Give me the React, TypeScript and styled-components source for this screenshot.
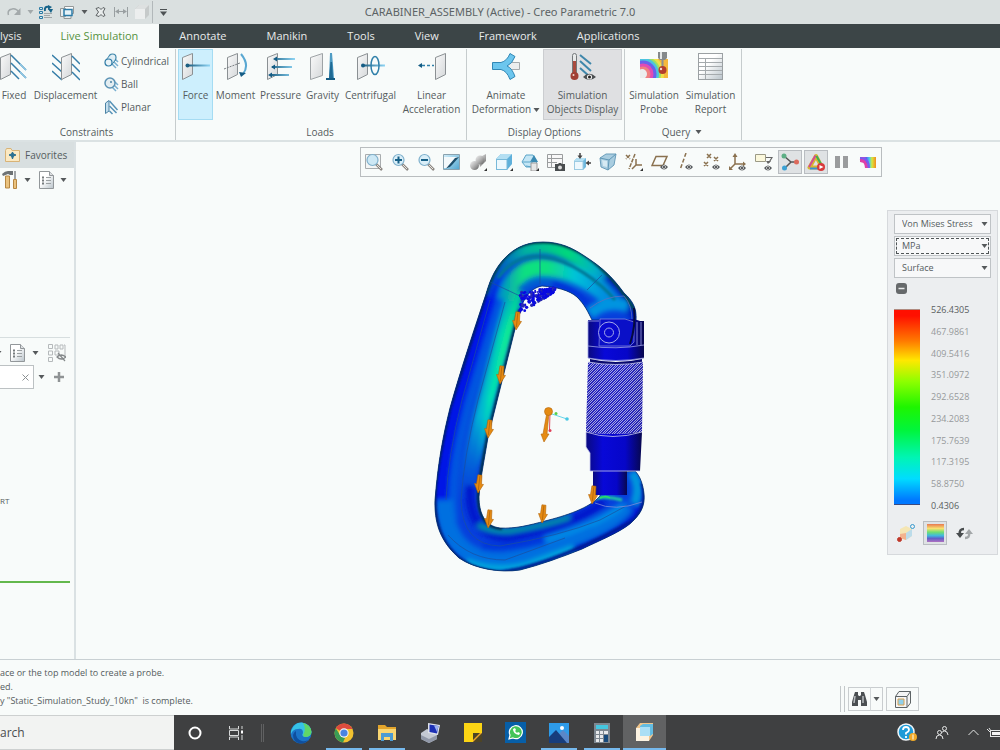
import React from "react";
import styled, { createGlobalStyle, css } from "styled-components";

const sans = `"Open Sans", "Noto Sans", sans-serif`;

const Global = createGlobalStyle`
  * { box-sizing: border-box; }
  body { margin: 0; background: #f8fbfa; color: #555c5e; font-family: ${sans}; font-size: 10px; line-height: 14px; }
  button, input, select { font: inherit; color: inherit; margin: 0; }
  svg { display: block; flex: none; }
`;

/* ---------- shell ---------- */
const Page = styled.div`
  display: flex;
  flex-direction: column;
  min-height: 100vh;
  overflow: hidden;
`;

const TitleBar = styled.header`
  display: grid;
  grid-template-columns: 1fr auto 1fr;
  align-items: center;
  height: 24px;
  background: #dae0e0;
`;

const Quick = styled.div`
  display: flex;
  align-items: center;
  height: 24px;
  padding-left: 4px;
`;

const IconButton = styled.button<{ $w?: number; $active?: boolean }>`
  display: flex;
  align-items: center;
  justify-content: center;
  flex: none;
  width: ${(p) => p.$w ?? 24}px;
  height: 24px;
  padding: 0;
  border: 1px solid ${(p) => (p.$active ? "#b9bdc1" : "transparent")};
  background: ${(p) => (p.$active ? "#dfe2e4" : "transparent")};
`;

const QuickRule = styled.span`
  width: 1px;
  height: 22px;
  background: #b2b8ba;
`;

const Title = styled.h1`
  margin: 0;
  font-family: "Noto Sans", ${sans};
  font-size: 11px;
  font-weight: 400;
  color: #5c6365;
`;

const Tabs = styled.nav`
  display: flex;
  height: 24px;
  background: #3c4547;
`;

const Tab = styled.button<{ $active?: boolean; $cut?: boolean }>`
  flex: none;
  padding: ${(p) => (p.$cut ? "0 18px 0 0" : p.$active ? "0 21px" : "0 20px")};
  border: 0;
  font-size: 11px;
  color: ${(p) => (p.$active ? "#56923f" : "#e8ebeb")};
  background: ${(p) => (p.$active ? "#f8fbfa" : "transparent")};
`;

/* ---------- ribbon ---------- */
const Ribbon = styled.div`
  display: flex;
  height: 94px;
  padding-top: 1px;
  border-bottom: 2px solid #dbe2e3;
  background: #f8fbfa;
`;

const Group = styled.section<{ $w: number }>`
  display: flex;
  flex-direction: column;
  flex: none;
  width: ${(p) => p.$w}px;
  padding-right: 2px;
  border-right: 1px solid #c6cccd;
`;

const GroupBody = styled.div<{ $pad: number }>`
  display: flex;
  flex: none;
  height: 71px;
  padding-left: ${(p) => p.$pad}px;
`;

const GroupLabel = styled.div`
  display: flex;
  align-items: center;
  justify-content: center;
  gap: 5px;
  flex: 1;
  padding-top: 3px;
`;

const BigButton = styled.button<{ $w: number; $tone?: "blue" | "grey" }>`
  display: flex;
  flex-direction: column;
  align-items: center;
  flex: none;
  width: ${(p) => p.$w}px;
  height: 71px;
  padding: 2px 0 0;
  border: 1px solid transparent;
  background: transparent;
  white-space: nowrap;
  ${(p) => p.$tone === "blue" && css`background: #cdeffd; border-color: #a5dcf3;`}
  ${(p) => p.$tone === "grey" && css`background: #dfe0e2; border-color: #cbcdd0;`}
`;

const BigLabel = styled.span`
  display: block;
  margin-top: 6px;
`;

const SmallStack = styled.div`
  display: flex;
  flex-direction: column;
  padding-left: 1px;
`;

const SmallButton = styled.button`
  display: flex;
  align-items: center;
  gap: 2px;
  height: 23px;
  padding: 0;
  border: 0;
  background: transparent;
  white-space: nowrap;
`;

/* ---------- work area ---------- */
const Work = styled.main`
  display: flex;
  flex: 1;
  border-bottom: 1px solid #c9d0d3;
`;

const Side = styled.aside`
  display: flex;
  flex-direction: column;
  flex: none;
  width: 76px;
  overflow: hidden;
  border-right: 2px solid #dae1e3;
`;

const Favorites = styled.button`
  display: flex;
  align-items: center;
  gap: 5px;
  width: 74px;
  height: 26px;
  padding: 0 0 0 5px;
  border: 0;
  background: #d8dfe0;
`;

const SideRow = styled.div<{ $cut?: boolean }>`
  display: flex;
  align-items: center;
  height: 24px;
  margin-left: ${(p) => (p.$cut ? "-5px" : "0")};
`;

const CutCaret = styled.span`
  flex: none;
  width: 10px;
`;

const SideTree = styled.div`
  width: 70px;
  height: 146px;
  margin-bottom: 3px;
  border-bottom: 1px solid #d7dedf;
`;

const Filter = styled.input`
  width: 17px;
  height: 22px;
  padding: 0;
  border: 0;
  background: transparent;
  outline: 0;
`;

const FilterBox = styled.div`
  display: flex;
  align-items: center;
  width: 34px;
  height: 24px;
  border: 1px solid #bcc1c3;
  border-left: 0;
  background: #fff;
`;

const Model = styled.div`
  height: 194px;
  padding-top: 105px;
  width: 70px;
  border-bottom: 2px solid #63b84c;
  font-size: 8px;
`;

const Canvas = styled.div`
  display: flex;
  flex-direction: column;
  flex: 1;
  min-width: 0;
`;

const ViewBar = styled.div`
  display: flex;
  align-items: center;
  align-self: flex-start;
  height: 30px;
  margin: 5px 0 0 284px;
  border: 1px solid #b9bdbf;
`;

const ViewSlot = styled.div`
  display: flex;
  justify-content: center;
  width: 26px;
`;

const Stage = styled.div`
  display: flex;
  align-items: flex-start;
  justify-content: space-between;
  padding: 33px 2px 0 354px;
`;

const Drawing = styled.div`
  padding-top: 26px;
`;

/* ---------- legend ---------- */
const Legend = styled.section`
  flex: none;
  width: 111px;
  height: 345px;
  padding: 3px 6px;
  border: 1px solid #d6d9dc;
  background: #eceef0;
`;

const Pick = styled.label<{ $focus?: boolean }>`
  display: flex;
  align-items: center;
  height: 20px;
  margin-bottom: 2px;
  padding-right: 2px;
  border: 1px solid #bfc3c6;
  outline: ${(p) => (p.$focus ? "1px dashed #4f5557" : "0")};
  outline-offset: -3px;
  background: #f7f8f9;
  font-size: 9px;
`;

const PickSelect = styled.select`
  appearance: none;
  flex: 1;
  min-width: 0;
  height: 16px;
  padding: 0 0 0 7px;
  border: 0;
  outline: 0;
  background: transparent;
`;

const Collapse = styled.button`
  display: block;
  margin: 5px 0 0 2px;
  padding: 0;
  border: 0;
  background: transparent;
`;

const Scale = styled.div`
  display: flex;
  gap: 11px;
  height: 208px;
  margin-top: 10px;
`;

const Ramp = styled.div`
  width: 26px;
  height: 196px;
  margin-top: 5px;
  border-top: 1px solid #b08a80;
  border-bottom: 1px solid #3c4a80;
  background: linear-gradient(#ff1000 3%, #ff7a00 16%, #ffe800 26%, #8cff00 37%, #1ef500 50%, #00f53c 62%, #00f5b4 76%, #00dcff 87%, #0078ff 98%);
`;

const Values = styled.ol`
  display: flex;
  flex-direction: column;
  justify-content: space-between;
  margin: 0;
  padding: 0;
  list-style: none;
  font-size: 9px;
  line-height: 12px;
`;

const Value = styled.li<{ $end: boolean }>`
  color: ${(p) => (p.$end ? "#595e60" : "#96999b")};
`;

const LegendTools = styled.div`
  display: flex;
  align-items: center;
  gap: 5px;
  margin-top: 9px;
`;

/* ---------- messages and taskbar ---------- */
const Status = styled.footer`
  display: flex;
  justify-content: space-between;
  height: 55px;
  padding: 6px 81px 0 0;
`;

const Messages = styled.div`
  font-size: 9px;
  line-height: 14px;
  white-space: pre;
`;

const StatusTools = styled.div`
  display: flex;
  align-items: center;
  align-self: flex-end;
  gap: 3px;
  height: 26px;
  margin-bottom: 3px;
`;

const Grip = styled.span`
  width: 1px;
  height: 26px;
  background: #c3c8ca;
`;

const ToolBox = styled.div`
  display: flex;
  align-items: center;
  height: 24px;
  border: 1px solid #c9cdcf;
  & > button + button { border-left-color: #d3d7d9; }
`;

const Taskbar = styled.div`
  display: flex;
  height: 35px;
  background: #3f4041;
`;

const Search = styled.input`
  flex: none;
  width: 174px;
  height: 35px;
  padding: 0;
  border: 0;
  border-top: 1px solid #cdd0d0;
  border-bottom: 1px solid #cdd0d0;
  background: #f2f3f2;
  && { font-size: 12px; color: #4a4d4f; }
`;

const TaskButton = styled.button<{ $w?: number; $open?: boolean; $active?: boolean }>`
  display: flex;
  align-items: center;
  justify-content: center;
  flex: none;
  width: ${(p) => p.$w ?? 43}px;
  height: 35px;
  padding: 0;
  border: 0;
  background: ${(p) => (p.$active ? "#616263" : "transparent")};
  ${(p) =>
    p.$open &&
    css`
      background-image: linear-gradient(#76b9ed, #76b9ed);
      background-repeat: no-repeat;
      background-position: center bottom;
      background-size: ${p.$active ? "100%" : "36px"} 2px;
    `}
`;

const TaskRule = styled.span`
  align-self: center;
  width: 3px;
  height: 18px;
  margin: 0 15px 0 5px;
  border: 1px solid #606162;
  border-width: 0 1px;
`;

const Tray = styled.div`
  display: flex;
  margin-left: auto;
`;

/* ---------- icons ---------- */
type Kids = { children: React.ReactNode };
const I = ({ w, h, children }: Kids & { w: number; h: number }) => (
  <svg width={w} height={h} viewBox={`0 0 ${w} ${h}`} fill="none" aria-hidden="true">
    {children}
  </svg>
);

const Caret = ({ color = "#55595b" }: { color?: string }) => (
  <I w={7} h={4}><path d="M0.5 0h6L3.5 4z" fill={color} /></I>
);

const Eye = ({ x, y }: { x: number; y: number }) => (
  <g transform={`translate(${x} ${y})`}>
    <path d="M0 3Q4 -2 8 3Q4 8 0 3Z" fill="#55595c" />
    <circle cx="4" cy="3" r="1.800" fill="#f4f4f4" />
    <circle cx="4" cy="3" r="1" fill="#2c2f31" />
  </g>
);

const DefsSvg = styled.svg`
  position: absolute;
  width: 0;
  height: 0;
`;

const Gradients = () => (
  <DefsSvg aria-hidden="true">
    <defs>
      <linearGradient id="plate" x1="0" y1="0" x2="1" y2="1">
        <stop offset="0" stopColor="#fafafa" /><stop offset="1" stopColor="#d4d7d9" />
      </linearGradient>
      <linearGradient id="beam" x1="0" y1="0" x2="1" y2="0">
        <stop offset="0" stopColor="#1c5f82" /><stop offset="1" stopColor="#8fd5f5" />
      </linearGradient>
      <linearGradient id="rainbow" x1="0" y1="0" x2="1" y2="0">
        <stop offset="0" stopColor="#e8402c" /><stop offset=".2" stopColor="#d545c8" /><stop offset=".4" stopColor="#5b62f0" />
        <stop offset=".58" stopColor="#46d0e8" /><stop offset=".75" stopColor="#d8e63c" /><stop offset="1" stopColor="#f48a1e" />
      </linearGradient>
      <linearGradient id="spectrum" x1="0" y1="0" x2="0" y2="1">
        <stop offset="0" stopColor="#e87850" /><stop offset=".25" stopColor="#f8e070" /><stop offset=".45" stopColor="#70e070" />
        <stop offset=".65" stopColor="#40b8e0" /><stop offset=".8" stopColor="#6060c8" /><stop offset="1" stopColor="#b070c0" />
      </linearGradient>
      <linearGradient id="sheet" x1="0" y1="0" x2="1" y2="1">
        <stop offset=".4" stopColor="#fff" /><stop offset="1" stopColor="#b9c3ca" />
      </linearGradient>
      <linearGradient id="aqua" x1="0" y1="0" x2="1" y2="1">
        <stop offset="0" stopColor="#d5effa" /><stop offset="1" stopColor="#4fa6d0" />
      </linearGradient>
      <linearGradient id="steel" x1="0" y1="0" x2="1" y2="1">
        <stop offset="0" stopColor="#f4f4f4" /><stop offset=".5" stopColor="#b2b2b2" /><stop offset="1" stopColor="#5e5e5e" />
      </linearGradient>
    </defs>
  </DefsSvg>
);

const Plate = ({ x = 0 }: { x?: number }) => (
  <path d={`M${x + 0.5} 5.5L${x + 10.5} 1.5V22.5L${x + 0.5} 27.5Z`} fill="url(#plate)" stroke="#8b9093" />
);

const FixedIcon = () => (
  <I w={28} h={30}>
    <Plate />
    <path d="M11 3L26 18M11 11L26 26M11 19L19 27" stroke="#367ea8" strokeWidth="1.500" />
    <path d="M20 12l6 6M20 20l6 6" stroke="#8fc7e4" strokeWidth="1.500" />
  </I>
);
const DisplacementIcon = () => (
  <I w={28} h={30}>
    <g stroke="#367ea8" strokeWidth="1.500"><path d="M0 3L10 12M0 11L10 20M0 19L10 28" /></g>
    <Plate x={9} />
    <g stroke="#367ea8" strokeWidth="1.500"><path d="M20 4L28 12M20 12L28 20M20 20L28 28" /></g>
  </I>
);
const ForceIcon = () => (
  <I w={28} h={30}><Plate /><path d="M6 12.500H28v2H6z" fill="url(#beam)" /><circle cx="5.500" cy="13.500" r="2" fill="#1c5f82" /></I>
);
const MomentIcon = () => (
  <I w={24} h={30}>
    <Plate x={3} /><path d="M0 17L16 11" stroke="#777c80" strokeDasharray="2 1" />
    <path d="M17 2Q26 13 19 22" stroke="#5aa8d2" strokeWidth="2" /><path d="M15 20l7 1-5 4z" fill="#155c84" />
  </I>
);
const PressureIcon = () => (
  <I w={28} h={30}>
    <Plate />
    <path d="M8 6H28v2H8zM5 14H25v2H5zM3 22H22v2H3z" fill="url(#beam)" />
    <path d="M6 7l4-2.500v5zM4 15l4-2.500v5zM1 23l4-2.500v5z" fill="#155c84" />
  </I>
);
const GravityIcon = () => (
  <I w={26} h={30}>
    <path d="M.5 5.500L12.500 1.500V23.500L.5 27.500Z" fill="url(#plate)" stroke="#9ea3a6" />
    <path d="M20 1h2l2 25h-5z" fill="#4f9cc4" /><path d="M20.500 10h1.500l1 16h-4z" fill="#1f6a94" /><path d="M16 26h9v2h-9z" fill="#155c84" />
  </I>
);
const CentrifugalIcon = () => (
  <I w={28} h={30}>
    <Plate /><path d="M6 12.500H28v2H6z" fill="url(#beam)" /><circle cx="6" cy="13.500" r="2" fill="#155c84" />
    <ellipse cx="18" cy="13.500" rx="4" ry="9" stroke="#2f7fa9" strokeWidth="1.500" />
  </I>
);
const LinearIcon = () => (
  <I w={28} h={30}>
    <Plate x={17} /><path d="M4 13.500H16" stroke="#2f7fa9" strokeWidth="1.500" strokeDasharray="3 2" /><path d="M0 13.500l4-2.500v5z" fill="#155c84" />
  </I>
);
const AnimateIcon = () => (
  <I w={28} h={30}>
    <path d="M14 10.500H27.500V17.500H14Z" fill="#eceeee" stroke="#a6abad" />
    <path d="M.5 10.500H9Q15 9 18 1.500L23 4.500Q20 12 15 14Q20 16 23 24.500L18 27.500Q15 19 9 17.500H.5Z" fill="#6cc6ee" stroke="#3187b5" />
  </I>
);
const ObjectsIcon = () => (
  <I w={26} h={30}>
    <rect x="2.500" y="1.500" width="4" height="22" rx="2" fill="#e8eaea" stroke="#75797b" />
    <path d="M3 9h3v14H3z" fill="#a94a3e" /><circle cx="4.500" cy="24" r="4" fill="#a03f35" /><circle cx="3.500" cy="23" r="1" fill="#f0d8d0" />
    <g stroke="#3f87ab" strokeWidth="2"><path d="M10 3L21 12M10 9L21 19M10 16L19 24" /></g>
    <path d="M13 25Q19 18.500 26 25Q19 31 13 25Z" fill="#4a4e50" /><circle cx="19.500" cy="25" r="2.600" fill="#eee" /><circle cx="19.500" cy="25" r="1.500" fill="#222" />
  </I>
);
const ProbeIcon = () => (
  <I w={28} h={30}>
    <defs><clipPath id="probeBox"><path d="M0 7H28V26H0Z" /></clipPath></defs>
    <g clipPath="url(#probeBox)">
      <path d="M0 7H28V26H0Z" fill="#f5b83c" />
      <circle cx="3" cy="22" r="21" fill="#f0e04a" /><circle cx="3" cy="22" r="18" fill="#9be068" /><circle cx="3" cy="22" r="16" fill="#4cc4e0" />
      <circle cx="3" cy="22" r="13.500" fill="#6a62ea" /><circle cx="3" cy="22" r="10.500" fill="#e04cb4" /><circle cx="3" cy="22" r="7.500" fill="#f08080" /><circle cx="2" cy="22" r="5" fill="#eceeee" />
    </g>
    <path d="M18 0h9v6l-2 2h-5l-2-2z" fill="#85898b" /><path d="M20 0h2v7h-2z" fill="#e4e6e6" /><path d="M21.500 8h2v8h-2z" fill="#8c8f92" />
    <circle cx="22.500" cy="18" r="4" fill="#b33d2d" /><circle cx="21" cy="17" r="1.200" fill="#f4d9d0" />
  </I>
);
const ReportIcon = () => (
  <I w={25} h={30}>
    <rect x=".5" y="1.500" width="24" height="26" fill="url(#sheet)" stroke="#9ba0a3" />
    <path d="M1 6.500h23M7.500 6V27M1 10.500h23M1 14.500h23M1 18.500h23M1 22.500h23" stroke="#a5aaad" />
  </I>
);
const Hatch = () => <path d="M9 8l5 5M8 11l4 4M11 6l3 3" stroke="#78afd0" strokeWidth="1.500" />;
const CylIcon = () => (
  <I w={15} h={16}><Hatch /><circle cx="8.500" cy="4.500" r="3.500" fill="#e2eff5" stroke="#3f87ab" strokeWidth="1.200" /><path d="M2 7l4-5 5 5-4 5z" fill="#dcecf4" /><path d="M2 7l4-5M7.500 12l4-5" stroke="#3f87ab" /><circle cx="4.500" cy="9.500" r="3.500" fill="#e9f3f7" stroke="#2f7ba6" strokeWidth="1.200" /></I>
);
const BallIcon = () => (
  <I w={15} h={16}><Hatch /><circle cx="6" cy="7" r="5" fill="#e3edf1" stroke="#5b92b4" strokeWidth="1.500" /><circle cx="7" cy="6" r="1" fill="#4c83a4" /></I>
);
const PlanarIcon = () => (
  <I w={15} h={16}><path d="M1.500 4L5 1.500V12L1.500 14.500Z" fill="#c3deed" stroke="#4c83a4" /><path d="M5.500 2l8 9M5.500 7l7 7M5.500 12l3 3" stroke="#5793b8" strokeWidth="1.500" /></I>
);

/* title bar icons */
const RedoIcon = () => <I w={14} h={12}><path d="M1.500 9Q0 4 5 3Q9 2 12 6" stroke="#a3a9ab" strokeWidth="1.500" /><path d="M13.500 2v7H7z" fill="#a3a9ab" /></I>;
const RegenIcon = () => (
  <I w={14} h={15}>
    <path d="M.5 2.500h3v2h-3zM.5 6.500h3v2h-3zM.5 11.500h3v2h-3z" fill="#d5e8f0" stroke="#2a7aa4" />
    <path d="M5 8.500h8M5 12.500h8M5 10.500h6" stroke="#a0a6a8" />
    <path d="M6 6Q5 1 10 2" stroke="#176389" strokeWidth="2" /><path d="M9 0l4 2-4 3zM9 4h5l-2 4z" fill="#176389" />
  </I>
);
const WindowsIcon = () => (
  <I w={15} h={14}><path d="M4.500 1.500h9v7h-9z" fill="#fff" stroke="#939899" /><path d="M.5 3.500h5v8h-5zM4 10.500h7v3H4z" fill="#e9edee" stroke="#939899" /><path d="M4 4.500h8v6H4z" fill="#e7f3f8" stroke="#2c7ca8" strokeWidth="1.500" /></I>
);
const CloseBox = () => <I w={11} h={10}><path d="M1 1.500l3-1 2 2 2-2 2 1-2 3.500 2 3.500-2 1-2-2-2 2-3-1 2.500-3.500z" fill="#e8ecec" stroke="#5c6163" /></I>;
const MeasureIcon = () => <I w={14} h={12}><path d="M.5 1v10M13.500 1v10M2 5.500h10" stroke="#999fa1" /><path d="M1 5.500l4-2.500v5zM13 5.500l-4-2.500v5z" fill="#999fa1" /></I>;
const GreyCube = () => <I w={14} h={14}><path d="M0 4L4 0H14V10L10 14H0Z" fill="#c6caca" /><path d="M0 4h10v10H0z" fill="#eceeee" /><path d="M0 4L4 0H14L10 4z" fill="#dde0e0" /></I>;

/* view toolbar icons */
const Lens = ({ sign, blue }: { sign?: string; blue?: boolean }) => (
  <>
    <path d="M11 11l6 6" stroke="#8c8782" strokeWidth="2.500" /><path d="M12 12l4 4" stroke="#e8e4df" />
    <circle cx="7.500" cy="7" r="5.500" fill={blue ? "#d9eef8" : "#cde8f5"} stroke="#7fb0cc" strokeWidth="1.200" />
    {sign && <path d={sign} stroke="#176087" strokeWidth="2" />}
  </>
);
const cube = (
  <><path d="M1 6L6 1H17V11L12 17H1Z" fill="#5fb0da" /><path d="M1 6L6 1H17L12 6Z" fill="#b4dff2" /><path d="M1.500 6.500H12V16.500H1.500Z" fill="#edf8fd" stroke="#78b9d9" /></>
);
const corner = <path d="M18 15v3h-3z" fill="#333" />;
const B = "#8a714f";
const viewIcons: { name: string; on?: boolean; art: React.ReactNode }[] = [
  { name: "Refit", art: <><path d="M.5 1.500h15v14H.5z" stroke="#a8acae" fill="#f3f5f5" /><Lens /></> },
  { name: "Zoom In", art: <Lens blue sign="M4 7h7M7.500 3.500v7" /> },
  { name: "Zoom Out", art: <Lens blue sign="M4 7h7" /> },
  { name: "Repaint", art: <><path d="M.5 1.500h16v15H.5z" fill="url(#aqua)" stroke="#8aa2ae" /><path d="M1 4h14L5 15H1z" fill="#f4f9fb" /><path d="M3 15.500Q7 15 9 12L16 4l-4 1-6 7z" fill="#1d4f6b" /></> },
  { name: "Shading", art: <><path d="M9 5l8-4v7l-6 6z" fill="url(#steel)" /><circle cx="11" cy="7" r="4.500" fill="url(#steel)" /><circle cx="5.500" cy="12.500" r="4.500" fill="url(#steel)" />{corner}</> },
  { name: "Display Style", art: <>{cube}{corner}</> },
  { name: "Saved Orientations", art: <><path d="M1 9L5 2H12L16 9L12 14H5Z" fill="#c4e6f5" stroke="#5ba4c8" /><path d="M9 9l4-7 4 7z" fill="#3b8ab2" /><path d="M2 9h9M5 13l6 1V9" stroke="#5ba4c8" /><path d="M10 10h6v8h-6z" fill="#e5e6e6" stroke="#9a9a9a" />{corner}</> },
  { name: "View Manager", art: <><path d="M.5 1.500h15v13H.5z" fill="#f8f8f8" stroke="#9a9d9e" /><path d="M0 5.500h15M0 9.500h10M4.500 2v12" stroke="#9a9d9e" /><path d="M8 11h3l1-1h2l1 1h3v7H8z" fill="#484c4e" /><circle cx="13" cy="14.500" r="2" fill="#ddd" /></> },
  { name: "View Normal", art: <><path d="M1 8L4 5H13V14L10 17H1Z" fill="#6fb9de" /><path d="M1 8L4 5H13L10 8Z" fill="#b4dff2" /><path d="M1.500 8.500H10V16.500H1.500Z" fill="#edf8fd" stroke="#9ccbe2" /><path d="M7 0v4M18 10h-3" stroke="#444" strokeWidth="1.500" /><path d="M4.500 2.500h5L7 6zM16 7.500v5L12.500 10z" fill="#444" /></> },
  { name: "Perspective", art: <><path d="M1 5L7 1H17L15 12L9 17L2 14Z" fill="#a9cde0" stroke="#6b9ebb" /><path d="M1 5l9 2 7-6M10 7L9 17" stroke="#5f97b6" /><path d="M3 7l5 1v6l-4-1z" fill="#d6eaf3" /></> },
  { name: "Datum Display", art: <><path d="M1 2l4 4M5 2L1 6M10 1L4 16" stroke={B} strokeWidth="1.500" strokeDasharray="4 1" /><path d="M11 6v6l-4 4M11 12h6" stroke={B} strokeWidth="1.500" />{corner}</> },
  { name: "Plane Display", art: <><path d="M5 3.500H16L12 12.500H1Z" stroke={B} strokeWidth="1.500" /><Eye x={9} y={11} /></> },
  { name: "Axis Display", art: <><path d="M9 0L3 17" stroke={B} strokeWidth="1.500" strokeDasharray="4 2" /><Eye x={8} y={11} /></> },
  { name: "Point Display", art: <><path d="M4 1l4 4M8 1L4 5M11 4l4 4M15 4l-4 4M1 9l4 4M5 9l-4 4" stroke={B} strokeWidth="1.500" /><Eye x={9} y={11} /></> },
  { name: "Csys Display", art: <><path d="M6 2v9L1 16M6 11h9" stroke={B} strokeWidth="1.500" /><path d="M3.500 4L6 0l2.500 4zM14 8.500l3 2.500-3 2.500zM0 13v4h4z" fill={B} /><Eye x={9} y={12} /></> },
  { name: "Annotation Display", art: <><path d="M.5 1.500h10v7H.5z" fill="#fbf8dc" stroke="#9c9a86" /><path d="M11 4.500h6l-3 5" stroke="#666" strokeWidth="1.200" /><path d="M11 8h5l-3 3z" fill="#666" /><Eye x={9} y={12} /></> },
  { name: "Spin Center", on: true, art: <><path d="M3 3l7 6h6M10 9l-6 6" stroke="#555" strokeWidth="1.500" /><circle cx="3" cy="3" r="2.500" fill="#5cae85" /><circle cx="15.500" cy="9" r="2.500" fill="#dc6a5c" /><circle cx="3.500" cy="15" r="2.500" fill="#3ba1d4" /></> },
  { name: "Live Results", on: true, art: <><path d="M9 3L2.500 14.500H15Z" stroke="#d8b532" strokeWidth="4" strokeLinejoin="round" /><path d="M2 14L8.500 2.500" stroke="#d34b96" strokeWidth="2" /><path d="M9.500 3l5 9" stroke="#3dae54" strokeWidth="2" /><path d="M3 15.500h10" stroke="#3a8fd0" strokeWidth="2" /><circle cx="14" cy="14" r="4" fill="#d93a3a" /><path d="M12.500 12v4l4-2z" fill="#fff" /></> },
  { name: "Pause", art: <path d="M2 3h5v12H2zM10 3h5v12h-5z" fill="#9a9c9d" /> },
  { name: "Fringe", art: <><path d="M1 4h16v11H8Q8 9 1 9z" fill="url(#rainbow)" /><path d="M1 7.500Q7 7 7.500 15" stroke="#e040a8" strokeWidth="3" /><path d="M1 5Q10 5 10 15" stroke="#7a5cf0" strokeWidth="2" /></> },
];

const ListIcon = () => (
  <I w={15} h={18}>
    <path d="M.5.500h10l4 4v13H.5z" fill="url(#sheet)" stroke="#92979a" /><path d="M10.500.500v4h4" fill="#dde0e2" stroke="#92979a" />
    <path d="M3 6.500h2M3 9.500h2M3 12.500h2" stroke="#777c7e" strokeWidth="2" /><path d="M7 6.500h5M7 9.500h5M7 12.500h5" stroke="#9ba0a2" />
  </I>
);

/* ---------- model ---------- */
const bodyPath =
  "M636 320C637 308 632 300 624 293C612 276 600 266 586 257C573 248 560 242 543 242C524 242 510 250 499 265C492 275 489 284 486 294C474 330 460 372 450 408C443 436 438 462 435 500C434 530 445 545 459 558C475 569 500 573 520 570C540 565 562 557 582 549C605 538 625 530 634 520C642 512 645 504 644 494C643 484 640 476 635 471L600 474V496C590 508 565 516 545 521C530 525 515 529 500 528C484 526 479 512 479 497C480 480 484 462 488 437L518 317C522 300 530 288 542 286C556 287 569 290 577 297C585 305 588 312 592 320Z";

const Arrow = ({ x, y }: { x: number; y: number }) => (
  <g transform={`translate(${x} ${y}) rotate(6)`}>
    <path d="M-2-9L2-9L2.500 0H4.500L0 9L-4.500 0H-2.500Z" fill="#e58a12" stroke="#b5660a" strokeWidth=".6" />
    <path d="M0-8V6" stroke="#b5660a" strokeWidth=".8" />
  </g>
);

/* repeatable pseudo-random spread of the contact points under the top bend */
const specks = (() => {
  let seed = 7;
  const next = () => (seed = (seed * 16807) % 2147483647) / 2147483647;
  return Array.from({ length: 170 }, () => {
    const t = Math.pow(next(), 1.2);
    const spread = 18 * (1 - t) + 4;
    return { x: 520 + t * 35, y: 300 - t * 11 + (next() - 0.35) * spread, r: 0.8 + next() * 1.1, dark: next() < 0.25 };
  });
})();

const Carabiner = () => (
  <svg width="220" height="340" viewBox="430 236 220 340" fill="none" role="img" aria-label="Carabiner stress result">
    <defs>
      <clipPath id="body"><path d={bodyPath} /></clipPath>
      <filter id="soft" filterUnits="userSpaceOnUse" x="400" y="200" width="280" height="420"><feGaussianBlur stdDeviation="2.500" /></filter>
      <filter id="fine" filterUnits="userSpaceOnUse" x="400" y="200" width="280" height="420"><feGaussianBlur stdDeviation="1.200" /></filter>
      <linearGradient id="leg" gradientUnits="userSpaceOnUse" x1="510" y1="295" x2="468" y2="500">
        <stop offset="0" stopColor="#00b4b8" /><stop offset=".2" stopColor="#00d4b4" /><stop offset=".6" stopColor="#00b4d4" /><stop offset="1" stopColor="#0070d8" stopOpacity="0" />
      </linearGradient>
      <linearGradient id="legCore" gradientUnits="userSpaceOnUse" x1="516" y1="295" x2="484" y2="470">
        <stop offset="0" stopColor="#00e08c" stopOpacity=".5" /><stop offset=".2" stopColor="#10ec90" /><stop offset=".6" stopColor="#00e4b4" /><stop offset="1" stopColor="#00b8d4" stopOpacity="0" />
      </linearGradient>
      <linearGradient id="bend" gradientUnits="userSpaceOnUse" x1="500" y1="290" x2="612" y2="300">
        <stop offset="0" stopColor="#0090c8" /><stop offset=".2" stopColor="#10e080" /><stop offset=".4" stopColor="#10e080" /><stop offset=".65" stopColor="#00c4d8" /><stop offset="1" stopColor="#0080e0" />
      </linearGradient>
      <linearGradient id="rim" gradientUnits="userSpaceOnUse" x1="486" y1="290" x2="630" y2="300">
        <stop offset="0" stopColor="#0030d8" /><stop offset=".25" stopColor="#00b0a0" /><stop offset=".55" stopColor="#00d87c" /><stop offset=".75" stopColor="#00b0c8" /><stop offset="1" stopColor="#0028c8" />
      </linearGradient>
      <linearGradient id="barrel" x1="0" y1="0" x2="1" y2="0">
        <stop offset="0" stopColor="#0a0a80" /><stop offset=".3" stopColor="#0808d8" /><stop offset=".7" stopColor="#0606c8" /><stop offset="1" stopColor="#07074e" />
      </linearGradient>
      <pattern id="knurl" width="5" height="5" patternUnits="userSpaceOnUse">
        <path d="M0 0h5v5H0z" fill="#2a28c0" />
        <path d="M0 0h1v1H0zM2 0h1v1H2zM1 1h1v1H1zM4 1h1v1H4zM0 2h1v1H0zM3 2h1v1H3zM2 3h1v1H2zM4 3h1v1H4zM1 4h1v1H1zM3 4h1v1H3z" fill="#c4c4ea" />
      </pattern>
    </defs>
    <path d={bodyPath} fill="#0640dc" />
    <g clipPath="url(#body)">
      <g filter="url(#soft)">
        <path d="M496 270L456 400C444 450 438 480 440 512" stroke="#0018e6" strokeWidth="18" />
        <path d="M504 290L470 400C458 445 450 480 454 520" stroke="#0458e0" strokeWidth="8" />
        <path d="M516 290L484 410C474 450 466 480 466 505" stroke="url(#leg)" strokeWidth="16" />
        <path d="M520 290L491 400L478 470" stroke="url(#legCore)" strokeWidth="8" />
        <path d="M484 296C494 262 516 248 543 247C575 249 606 276 632 312" stroke="url(#rim)" strokeWidth="14" />
        <path d="M505 300C510 278 524 268 541 267C570 268 595 284 616 304" stroke="url(#bend)" strokeWidth="17" />
        <path d="M524 288Q532 280 546 280Q572 284 596 316" stroke="#0464d0" strokeWidth="8" />
        <path d="M552 283Q572 286 590 308" stroke="#0430d8" strokeWidth="7" />
        <path d="M606 276Q628 294 636 320" stroke="#001cc0" strokeWidth="9" />
        <path d="M590 314Q604 300 628 306" stroke="#0094e0" strokeWidth="12" />
        <path d="M444 500C445 545 472 563 505 561C545 556 590 532 630 508" stroke="#0070e0" strokeWidth="18" />
        <path d="M466 562Q495 573 525 566L575 548" stroke="#00a8dc" strokeWidth="7" />
        <path d="M482 546Q520 552 590 524" stroke="#0438dc" strokeWidth="9" />
        <path d="M470 485C468 525 486 537 508 537C545 531 580 520 604 502" stroke="#0014cc" strokeWidth="9" />
        <path d="M478 525Q492 532 510 531C530 528 550 524 570 517" stroke="#00989c" strokeWidth="5" />
        <path d="M545 540Q600 524 622 506" stroke="#008ce4" strokeWidth="7" />
        <path d="M575 552Q632 532 644 504" stroke="#0018d0" strokeWidth="12" />
        <path d="M632 472Q642 488 634 504" stroke="#0098dc" strokeWidth="9" />
      </g>
      <g filter="url(#fine)">
        <path d="M520 310L488 437C483 465 478 485 479 500C480 518 488 527 502 528" stroke="#04324c" strokeWidth="4" />
        <path d="M486 294L450 408C438 460 434 490 435 505C437 545 460 570 500 572" stroke="#041c70" strokeWidth="3" />
        <path d="M486 294C500 250 520 242 543 242C585 242 618 282 636 312" stroke="#044c44" strokeWidth="3" />
        <path d="M498 278C512 258 530 255 545 257C570 260 600 282 615 300" stroke="#067896" strokeWidth="3" />
        <path d="M500 572C540 568 600 540 634 520Q648 505 642 483" stroke="#041a90" strokeWidth="3" />
        <path d="M592 499Q605 495 622 500" stroke="#20c8a0" strokeWidth="3" />
      </g>
      <path d="M540 249V284M488 281L520 296M587 290L602 275M490 300L462 400Q448 455 446 500M505 302L478 400Q464 455 461 500Q462 545 500 546Q560 536 600 520L628 505M448 535Q470 560 505 560L565 538" stroke="#1b4f9d" strokeWidth=".7" />
      <path d="M590 308Q605 296 624 296Q632 305 632 320" stroke="#5b6fc0" strokeWidth=".8" />
      <path d="M595 503Q615 512 642 502" stroke="#7b8bd8" strokeWidth=".8" />
    </g>
    <path d={bodyPath} stroke="#06306a" strokeWidth=".8" />
    {/* locking sleeve */}
    <path d="M593 470H627V495H593Z" fill="url(#barrel)" />
    <path d="M588 320H616L634 319L640 321H644V358Q616 364 588 358Z" fill="url(#barrel)" />
    <path d="M600 319H625L634 322V342L630 346H599Z" fill="#0a10c8" stroke="#8d93dd" strokeWidth=".7" />
    <circle cx="609" cy="332.500" r="10.500" fill="#0909d0" stroke="#a4a8ea" /><circle cx="609" cy="332.500" r="4.500" stroke="#a4a8ea" />
    <path d="M634 308Q636 326 630 344" stroke="#050a40" strokeWidth="2" />
    <path d="M637 322V345M641 322V345M588 346Q616 350 644 345M588 358Q616 363 644 358M588 321H599M588 321V358" stroke="#9ea3e6" strokeWidth=".8" />
    <path d="M590 359Q616 365 642 359V366H590Z" fill="#0a0a70" />
    <path d="M588 362Q616 367 643 362L642 432Q612 436 586 432Z" fill="url(#knurl)" />
    <path d="M588 362Q616 367 643 362L642 432Q612 436 586 432Z" fill="url(#barrel)" opacity=".15" />
    <path d="M586 432Q612 436 642 432L640 471H590V453L586 447Z" fill="url(#barrel)" />
    <path d="M588 362Q616 367 643 362M586 432Q612 441 642 432M586 432V447L590 453V471H640" stroke="#c7c9ee" strokeWidth=".8" />
    <path d="M600 498q6-3 10 0" stroke="#28e060" strokeWidth="1.500" />
    {/* contact points and load markers */}
    {specks.map((p, i) => <circle key={i} cx={p.x} cy={p.y} r={p.r} fill={p.dark ? "#2a2ab0" : "#0a0ae0"} />)}
    {[[517, 321], [501, 375], [489, 429], [479, 484], [489, 519], [543, 514], [593, 495]].map(([x, y]) => <Arrow key={`${x}-${y}`} x={x} y={y} />)}
    <path d="M549 413L567 419" stroke="#68d6ea" /><circle cx="567" cy="419" r="1.800" fill="#48c8e4" />
    <path d="M550 413L549.500 430" stroke="#e05060" /><circle cx="550" cy="430.500" r="1.500" fill="#e04058" /><circle cx="556" cy="413.500" r="1.500" fill="#58d048" />
    <path d="M547 412L543 434H541L544 442L549 434H547L549 413Z" fill="#e58a12" stroke="#b5660a" strokeWidth=".6" />
    <circle cx="548.500" cy="411.500" r="4" fill="#e58a12" stroke="#b5660a" strokeWidth=".6" />
  </svg>
);

/* ---------- taskbar icons ---------- */
const EdgeIcon = () => (
  <I w={22} h={22}><circle cx="11" cy="11" r="10.500" fill="#1b74c8" /><path d="M1 9Q4 0 12 .5Q21 2 21.500 10Q21 15 15 15Q11 14 13 11Q13 6 8 7Q3 7 1 12Z" fill="#36c2e6" /><path d="M13 1Q21 3 21.500 10Q21 15 15 15Q12 14 14 11Q16 6 13 1Z" fill="#5fd668" /><path d="M6 9Q5 17 12 19Q17 20 20 16Q16 22 10 21.500Q3 20 3 13Q4 10 6 9Z" fill="#0f4f9e" /></I>
);
const ChromeIcon = () => (
  <I w={20} h={20}><circle cx="10" cy="10" r="9.500" fill="#f2c230" /><path d="M10 10L1.800 5.200A9.500 9.500 0 0 1 18.500 6H10Z" fill="#dd4b3e" /><path d="M1.800 5.200L6 12l5 3-2 4.500A9.500 9.500 0 0 1 1.800 5.200Z" fill="#3a9c55" /><circle cx="10" cy="10" r="4.700" fill="#f4f4f4" /><circle cx="10" cy="10" r="3.600" fill="#4a84e0" /></I>
);
const FolderIcon = () => (
  <I w={20} h={18}><path d="M1 1h7l2 2h9v13H1z" fill="#e3a52c" /><path d="M1 5h18v11H1z" fill="#f9d672" /><path d="M4 9h12v8h-3v-4H7v4H4z" fill="#4c9bd2" /></I>
);
const PcIcon = () => (
  <I w={20} h={20}><path d="M1 10l6-4 10 5v5l-8 4-8-4z" fill="#c4c9d3" /><path d="M1 12l8 4 8-4v4l-8 4-8-4z" fill="#9198a8" /><path d="M8 0l12 2-2 10-10-2z" fill="#dfe3ec" /><path d="M9.500 1.500l9 1.500-1.500 7.500-7.500-1.500z" fill="#1c2fb4" /><path d="M14 2.500l4.500.5-1.500 6z" fill="#9ab0f0" /></I>
);
const StickyIcon = () => <I w={18} h={19}><path d="M0 0h18v10l-9 9H0z" fill="#fcd514" /><path d="M9 10h9v9H9z" fill="#4d4426" /><path d="M9 19l9-9h-2l-7 7z" fill="#f0a52c" /></I>;
const WhatsIcon = () => (
  <I w={21} h={21}><path d="M0 0h21v21H0z" fill="#075fa8" /><path d="M4 17l1-4a6.500 6.500 0 1 1 3 3z" fill="#43c45a" stroke="#fff" strokeWidth="1.200" /><path d="M8 7q0 5 6 6l1-2-2-1-1 1-2-2 1-1-1-2z" fill="#fff" /></I>
);
const PhotosIcon = () => <I w={20} h={20}><path d="M0 0h20v20H0z" fill="#2e9be8" /><path d="M8 13l6-6 6 6v7H8z" fill="#5a87c8" /><path d="M0 14l7-7 11 13H0z" fill="#173d7c" /><circle cx="13" cy="5" r="2" fill="#fff" /></I>;
const CalcIcon = () => (
  <I w={16} h={20}><path d="M0 0h16v20H0z" fill="#7d8790" /><path d="M2 2h12v4H2z" fill="#45c7e0" /><path d="M2 8h3v3H2zM6 8h3v3H6zM2 12h3v3H2zM6 12h3v3H6zM2 16h3v3H2zM6 16h3v3H6zM10 8h4v3h-4z" fill="#e7e9eb" /><path d="M10 12h4v7h-4z" fill="#174a7c" /></I>
);
const CreoIcon = () => <I w={19} h={19}><path d="M1 5L5 0H18V12L14 18H1Z" fill="#f0c58b" /><path d="M1 5h13v13H1z" fill="#fcf3e2" /><path d="M5 3L8 1H18V11L15 13H5Z" fill="#63bce2" /><path d="M5 4h10v9H5z" fill="#abdff5" /></I>;
const TrayHelp = () => (
  <I w={21} h={20}><circle cx="9" cy="9" r="8" fill="#1e9bd8" stroke="#f2f6f8" strokeWidth="1.500" /><path d="M6 7Q6 4 9 4Q12 4 12 7Q12 8.500 9 10V11.500M9 13v2" stroke="#fff" strokeWidth="1.800" /><circle cx="16" cy="14" r="4" fill="#f0aa28" /><path d="M16 11.500v5" stroke="#fff" /></I>
);

const legendRows = ["526.4305", "467.9861", "409.5416", "351.0972", "292.6528", "234.2083", "175.7639", "117.3195", "58.8750", "0.4306"];

const InlineCaret = styled.span`
  display: inline-block;
  margin-left: 2px;
  vertical-align: middle;
`;

const Big = ({ w, icon, lines, tone, caret }: { w: number; icon: React.ReactNode; lines: string[]; tone?: "blue" | "grey"; caret?: boolean }) => (
  <BigButton $w={w} $tone={tone}>
    {icon}
    <BigLabel>
      {lines[0]}
      {lines[1] && <><br />{lines[1]}</>}
      {caret && <InlineCaret><Caret /></InlineCaret>}
    </BigLabel>
  </BigButton>
);

export default function App() {
  return (
    <Page>
      <Global />
      <Gradients />
      <TitleBar>
        <Quick>
          <IconButton $w={20} aria-label="Redo"><RedoIcon /></IconButton>
          <IconButton $w={12} aria-label="Redo list"><Caret color="#a3a9ab" /></IconButton>
          <IconButton $w={20} aria-label="Regenerate"><RegenIcon /></IconButton>
          <IconButton $w={22} aria-label="Windows"><WindowsIcon /></IconButton>
          <IconButton $w={12} aria-label="Window list"><Caret /></IconButton>
          <IconButton $w={20} aria-label="Close"><CloseBox /></IconButton>
          <IconButton $w={22} aria-label="Measure"><MeasureIcon /></IconButton>
          <IconButton $w={20} aria-label="Model display"><GreyCube /></IconButton>
          <QuickRule />
          <IconButton $w={20} aria-label="Customize">
            <I w={7} h={7}><path d="M0 .5h7" stroke="#4d5254" /><path d="M0 2.500h7L3.500 7z" fill="#4d5254" /></I>
          </IconButton>
        </Quick>
        <Title>CARABINER_ASSEMBLY (Active) - Creo Parametric 7.0</Title>
      </TitleBar>
      <Tabs>
        <Tab $cut>lysis</Tab>
        <Tab $active>Live Simulation</Tab>
        {["Annotate", "Manikin", "Tools", "View", "Framework", "Applications"].map((t) => <Tab key={t}>{t}</Tab>)}
      </Tabs>
      <Ribbon>
        <Group $w={176}>
          <GroupBody $pad={0}>
            <Big w={28} icon={<FixedIcon />} lines={["Fixed"]} />
            <Big w={75} icon={<DisplacementIcon />} lines={["Displacement"]} />
            <SmallStack>
              <SmallButton><CylIcon />Cylindrical</SmallButton>
              <SmallButton><BallIcon />Ball</SmallButton>
              <SmallButton><PlanarIcon />Planar</SmallButton>
            </SmallStack>
          </GroupBody>
          <GroupLabel>Constraints</GroupLabel>
        </Group>
        <Group $w={291}>
          <GroupBody $pad={2}>
            <Big w={35} tone="blue" icon={<ForceIcon />} lines={["Force"]} />
            <Big w={45} icon={<MomentIcon />} lines={["Moment"]} />
            <Big w={45} icon={<PressureIcon />} lines={["Pressure"]} />
            <Big w={39} icon={<GravityIcon />} lines={["Gravity"]} />
            <Big w={57} icon={<CentrifugalIcon />} lines={["Centrifugal"]} />
            <Big w={65} icon={<LinearIcon />} lines={["Linear", "Acceleration"]} />
          </GroupBody>
          <GroupLabel>Loads</GroupLabel>
        </Group>
        <Group $w={158}>
          <GroupBody $pad={2}>
            <Big w={74} icon={<AnimateIcon />} lines={["Animate", "Deformation"]} caret />
            <Big w={79} tone="grey" icon={<ObjectsIcon />} lines={["Simulation", "Objects Display"]} />
          </GroupBody>
          <GroupLabel>Display Options</GroupLabel>
        </Group>
        <Group $w={117}>
          <GroupBody $pad={1}>
            <Big w={56} icon={<ProbeIcon />} lines={["Simulation", "Probe"]} />
            <Big w={57} icon={<ReportIcon />} lines={["Simulation", "Report"]} />
          </GroupBody>
          <GroupLabel>Query <Caret /></GroupLabel>
        </Group>
      </Ribbon>
      <Work>
        <Side>
          <Favorites>
            <I w={15} h={14}><path d="M.5 2.500V13.500H14.500V2.500H7L6 .5H1.500Z" fill="#fbe9c2" stroke="#d8b377" /><path d="M7.500 4l1 2 2.500 1-2.500 1-1 3-1-3L4 7l2.500-1z" fill="#2a7092" stroke="#2a7092" /></I>
            Favorites
          </Favorites>
          <SideRow>
            <IconButton $w={20} aria-label="Settings">
              <I w={16} h={18}><path d="M0 3Q3 0 6 0h5v4H8L6 3 1 5z" fill="#6d7275" /><path d="M3.500 5h4v12h-4z" fill="#eac27e" stroke="#b68742" /><path d="M13 0v9" stroke="#85898c" strokeWidth="1.500" /><path d="M11.500 8.500h3v9h-3z" fill="#eac27e" stroke="#b68742" /></I>
            </IconButton>
            <IconButton $w={14} aria-label="Settings list"><Caret /></IconButton>
            <IconButton $w={24} aria-label="Show"><ListIcon /></IconButton>
            <IconButton $w={11} aria-label="Show list"><Caret /></IconButton>
          </SideRow>
          <SideTree />
          <SideRow $cut>
            <CutCaret><Caret /></CutCaret>
            <IconButton $w={24} aria-label="Tree columns"><ListIcon /></IconButton>
            <IconButton $w={12} aria-label="Tree column list"><Caret /></IconButton>
            <IconButton $w={32} aria-label="Hide items">
              <I w={18} h={18}><path d="M.5.500h4v4h-4zM.5 7h4v4h-4zM.5 13.500h4v4h-4zM7 7h4v4H7zM7 1h3v4H7zM12 1h3v4h-3zM16 1h1v13" stroke="#b5b9bb" /><path d="M9 13q4-4 9 0-5 4-9 0zM10 9l7 8" stroke="#85898b" strokeWidth="1.200" /></I>
            </IconButton>
          </SideRow>
          <SideRow>
            <FilterBox>
              <Filter aria-label="Filter" />
              <IconButton $w={16} aria-label="Clear"><I w={7} h={7}><path d="M.5.500l6 6M6.500.500l-6 6" stroke="#8b9092" /></I></IconButton>
            </FilterBox>
            <IconButton $w={14} aria-label="Filter list"><Caret /></IconButton>
            <IconButton $w={21} aria-label="Add"><I w={10} h={10}><path d="M0 5h10M5 0v10" stroke="#8f9395" strokeWidth="2.500" /></I></IconButton>
          </SideRow>
          <Model>RT</Model>
        </Side>
        <Canvas>
          <ViewBar>
            {viewIcons.map((v) => (
              <ViewSlot key={v.name}>
                <IconButton $active={v.on} aria-label={v.name}><I w={18} h={18}>{v.art}</I></IconButton>
              </ViewSlot>
            ))}
          </ViewBar>
          <Stage>
            <Drawing><Carabiner /></Drawing>
            <Legend>
              {["Von Mises Stress", "MPa", "Surface"].map((o) => (
                <Pick key={o} $focus={o === "MPa"}>
                  <PickSelect aria-label={o}><option>{o}</option></PickSelect>
                  <Caret />
                </Pick>
              ))}
              <Collapse aria-label="Collapse">
                <I w={11} h={11}><rect width="11" height="11" rx="3" fill="#66696b" /><path d="M2.500 5.500h6" stroke="#e8eaeb" strokeWidth="1.500" /></I>
              </Collapse>
              <Scale>
                <Ramp />
                <Values>
                  {legendRows.map((v, i) => <Value key={v} $end={i === 0 || i === legendRows.length - 1}>{v}</Value>)}
                </Values>
              </Scale>
              <LegendTools>
                <IconButton aria-label="Min and max">
                  <I w={18} h={18}><path d="M3 5l6-3 6 3v7l-6 4-6-2z" fill="#f5e6b4" /><path d="M9 9l6-4v7l-6 4z" fill="#bcdcea" /><path d="M3 10l6-1v7l-6-2z" fill="#f3b38e" /><circle cx="15.500" cy="2.500" r="2" stroke="#3598cc" /><circle cx="2.500" cy="15.500" r="2" fill="#c0392b" stroke="#c0392b" /></I>
                </IconButton>
                <IconButton $active aria-label="Legend colors"><I w={17} h={18}><path d="M0 0h17v18H0z" fill="url(#spectrum)" /></I></IconButton>
                <IconButton aria-label="Refresh">
                  <I w={17} h={13}><path d="M8 2Q3 2 4 7" stroke="#484c4e" strokeWidth="2.500" /><path d="M0 6h8l-4 5z" fill="#484c4e" /><path d="M9 11Q14 11 13 6" stroke="#a2a6a8" strokeWidth="2.500" /><path d="M9 7h8l-4-5z" fill="#a2a6a8" /></I>
                </IconButton>
              </LegendTools>
            </Legend>
          </Stage>
        </Canvas>
      </Work>
      <Status>
        <Messages>
          <div>ace or the top model to create a probe.</div>
          <div>ed.</div>
          <div>{`y "Static_Simulation_Study_10kn"  is complete.`}</div>
        </Messages>
        <StatusTools>
          <Grip /><Grip />
          <ToolBox>
            <IconButton $w={21} aria-label="Find"><I w={15} h={14}><path d="M3 0h3v3l1 1h1l1-1V0h3l1 3 2 7v4H9V8H6v6H0v-4l2-7z" fill="#4b4f52" /><path d="M3 4L2 11M11 4v7" stroke="#b9bdc0" strokeWidth="1.500" /></I></IconButton>
            <IconButton $w={12} aria-label="Find list"><Caret /></IconButton>
          </ToolBox>
          <ToolBox>
            <IconButton $w={31} aria-label="Selection filter"><I w={16} h={17}><path d="M.5 5.500L4 .5H15.500V12L12 16.500H.5ZM.5 5.500H12V16.500M12 5.500L15.500.500" fill="#f4f5f5" stroke="#5d6365" /><path d="M3 8h6v6H3z" fill="#8fd0ec" stroke="#dca14e" /></I></IconButton>
          </ToolBox>
        </StatusTools>
      </Status>
      <Taskbar>
        <Search aria-label="Search" defaultValue="arch" />
        <TaskButton $w={41} aria-label="Cortana"><I w={14} h={14}><circle cx="7" cy="7" r="5.500" stroke="#fff" strokeWidth="2" /></I></TaskButton>
        <TaskButton $w={41} aria-label="Task view"><I w={14} h={14}><path d="M.5 0v3h9V0M.5 14v-3h9v3M.5 4.500h9v5h-9zM13 0v3M13 9v5" stroke="#d8dada" /><path d="M12 4.500h2v3h-2z" fill="#fff" /></I></TaskButton>
        <TaskRule />
        <TaskButton aria-label="Edge"><EdgeIcon /></TaskButton>
        <TaskButton $open aria-label="Chrome"><ChromeIcon /></TaskButton>
        <TaskButton $open aria-label="File Explorer"><FolderIcon /></TaskButton>
        <TaskButton aria-label="Computer"><PcIcon /></TaskButton>
        <TaskButton aria-label="Sticky Notes"><StickyIcon /></TaskButton>
        <TaskButton aria-label="WhatsApp"><WhatsIcon /></TaskButton>
        <TaskButton $open aria-label="Photos"><PhotosIcon /></TaskButton>
        <TaskButton $open aria-label="Calculator"><CalcIcon /></TaskButton>
        <TaskButton $open $active aria-label="Creo"><CreoIcon /></TaskButton>
        <Tray>
          <TaskButton $w={36} aria-label="Help"><TrayHelp /></TaskButton>
          <TaskButton $w={34} aria-label="People"><I w={14} h={14}><circle cx="9.500" cy="2.500" r="2" stroke="#e6e7e7" /><circle cx="4.500" cy="6.500" r="2" stroke="#e6e7e7" /><path d="M6.500 7q1-2 3-2 3 0 3.500 4M1 13q0-4 3.500-4T8 13" stroke="#e6e7e7" /></I></TaskButton>
          <TaskButton $w={28} aria-label="Hidden icons"><I w={11} h={7}><path d="M.5 6l5-5 5 5" stroke="#e6e7e7" /></I></TaskButton>
          <TaskButton $w={13} aria-label="Battery"><I w={13} h={10}><path d="M3.500 2.500H13M3.500 8.500H13M3.500 3v6M0 1l3 3M2 0l2 3" stroke="#e6e7e7" /><path d="M5 4h8v3H5z" fill="#f4f4f4" /></I></TaskButton>
        </Tray>
      </Taskbar>
    </Page>
  );
}
